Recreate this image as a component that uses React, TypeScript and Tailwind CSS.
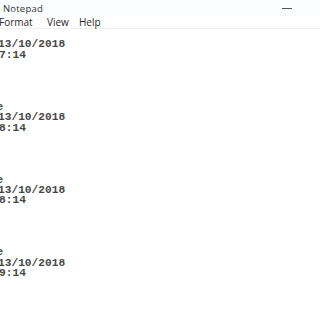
import React from 'react';

type Entrada = {
  topo: string;
  hora: string;
};

const entradas: Entrada[] = [
  { topo: '', hora: '17:14' },
  { topo: 'e', hora: '18:14' },
  { topo: 'e', hora: '18:14' },
  { topo: 'e', hora: '19:14' },
];

export default function App() {
  return (
    <div className="w-[320px] h-[320px] overflow-hidden bg-white font-['Open_Sans','Liberation_Sans',sans-serif]">
      {/* Barra de título */}
      <div className="h-[17px] flex items-center justify-between bg-[#fbfeff] pl-[3px] pr-[28px]">
        <span className="text-[9.5px] text-[#333] pt-[2px] tracking-[0.2px]">Notepad</span>
        <span className="w-[10px] h-[1px] bg-[#555]"></span>
      </div>

      {/* Menu */}
      <div className="h-[12px] flex items-center text-[10px] text-[#2a2a2a] border-b border-[#f0f0f0] -ml-[1px]">
        <span className="w-[48px]">Format</span>
        <span className="w-[32px]">View</span>
        <span>Help</span>
      </div>

      {/* Área de texto */}
      <div className="font-['Liberation_Mono',monospace] text-[11.2px] leading-[10.4px] font-bold text-[#474747] whitespace-pre overflow-hidden">
        {entradas.map((e, i) => (
          <div key={i} className="h-[72.8px]">
            <div className="h-[10.4px] -ml-[3.6px]">{e.topo}</div>
            <div className="h-[10.4px] -ml-[2px]">13/10/2018</div>
            <div className="h-[10.4px] -ml-[7.6px]">{e.hora}</div>
          </div>
        ))}
      </div>
    </div>
  );
}
